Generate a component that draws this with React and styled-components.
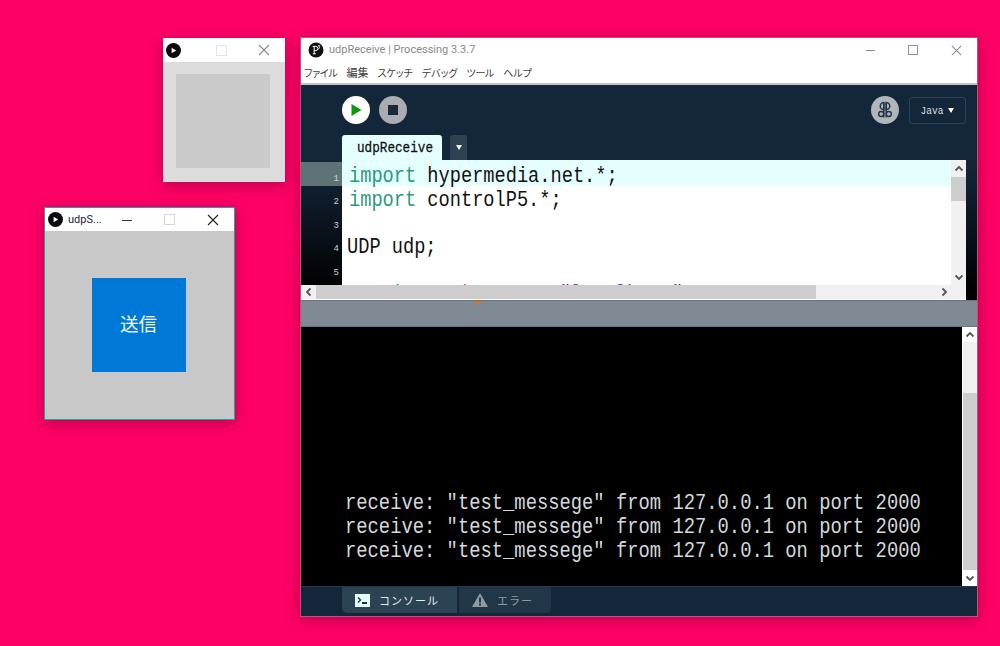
import React from "react";
import styled, { createGlobalStyle } from "styled-components";

const Global = createGlobalStyle`
  html, body { margin: 0; padding: 0; background: #ff0066; }
  body { font-family: "Noto Sans CJK JP", "Noto Sans", sans-serif; overflow: hidden; }
`;
const MONO = `"Liberation Mono", "DejaVu Sans Mono", monospace`;

const Desktop = styled.div`position: relative; width: 1000px; height: 646px; background: #ff0066; overflow: hidden;`;

const AppWindow = styled.div`
  position: absolute; left: ${p => p.$x}px; top: ${p => p.$y}px; width: ${p => p.$w}px; height: ${p => p.$h}px;
  box-sizing: border-box; display: flex; flex-direction: column;
  border: ${p => p.$border ? `1px solid ${p.$border}` : "none"};
  box-shadow: 0 3px 14px rgba(0,0,0,.28);
`;
const TitleBar = styled.div`
  height: ${p => p.$h}px; flex: none; background: #fff; display: flex; align-items: center; position: relative;
  padding-left: ${p => p.$pad}px;
  svg { flex: none; }
`;
const TitleText = styled.span`
  font-family: Roboto, "Liberation Sans", sans-serif; font-size: 11px; color: ${p => p.$c}; margin-left: ${p => p.$ml}px; white-space: nowrap; line-height: 14px;
`;
const Spacer = styled.div`flex: 1;`;
const Caption = styled.span`
  width: ${p => p.$w}px; height: 100%; display: flex; align-items: center; justify-content: center; flex: none;
`;

const Glyph = ({ kind, c, size = 12 }) => (
  <svg width={size} height={size} viewBox="0 0 12 12" fill="none" stroke={c} strokeWidth="1.1" shapeRendering="crispEdges">
    {kind === "min" && <path d="M1 6.5h10" />}
    {kind === "max" && <rect x="1" y="1" width="10" height="10" />}
    {kind === "close" && <path d="M1 1l10 10M11 1L1 11" shapeRendering="auto" />}
  </svg>
);
const ProcIcon = () => (
  <svg width="15" height="15" viewBox="0 0 15 15">
    <circle cx="7.5" cy="7.5" r="7.5" fill="#0b0b0b" />
    <path d="M5.6 4.8l4.6 2.7-4.6 2.7z" fill="#fff" />
  </svg>
);
const P3Icon = () => (
  <svg width="16" height="16" viewBox="0 0 16 16">
    <circle cx="8" cy="8" r="7.5" fill="#111" />
    <path d="M4.6 4.4h3.2a2 2 0 0 1 0 4.2H6.2M6.2 4.4v7.4M4.8 11.8h3" fill="none" stroke="#fff" strokeWidth="1" />
    <path d="M10 3.6h1.8l-1 1.2a.9.9 0 1 1-.9 1.3" fill="none" stroke="#fff" strokeWidth=".8" />
  </svg>
);

const Menu = styled.div`
  height: 21px; flex: none; background: #fff; display: flex; align-items: center; padding-left: 3px; gap: 9px;
  border-bottom: 2px solid #c4c4c4; box-sizing: content-box;
`;
const MenuItem = styled.span`
  font-size: ${p => p.$s}px; color: #3d3d3d; line-height: 21px; white-space: nowrap; font-feature-settings: "palt";
  letter-spacing: ${p => p.$ls}px;
`;

const DarkArea = styled.div`
  height: 215px; flex: none; display: flex; flex-direction: column;
  background: linear-gradient(#14273a 0%, #14273a 35%, #000 95%);
`;
const Toolbar = styled.div`height: 50px; flex: none; display: flex; align-items: center; padding: 0 11px 0 41px; margin-top: 0;`;
const RoundBtn = styled.div`
  width: 28px; height: 28px; border-radius: 50%; background: ${p => p.$bg}; display: flex; align-items: center; justify-content: center;
  margin-right: ${p => p.$mr || 0}px; flex: none;
`;
const JavaBtn = styled.div`
  width: 57px; height: 27px; box-sizing: border-box; border: 1px solid #2c4154; border-radius: 3px; margin-left: 10px;
  color: #d9dfe3; font-family: ${MONO}; display: flex; align-items: center; justify-content: center; gap: 5px; flex: none;
`;
const JavaLabel = styled.span`font-size: 9.5px; transform: scaleY(1.2); display: inline-block;`;
const Caret = styled.span`
  width: 0; height: 0; border-left: ${p => p.$s}px solid transparent; border-right: ${p => p.$s}px solid transparent; border-top: ${p => p.$s + 2}px solid #fff;
`;
const TabRow = styled.div`height: 25px; flex: none; display: flex; padding-left: 41px; gap: 8px;`;
const Tab = styled.div`
  width: 100px; box-sizing: border-box; padding-left: 6px; background: #e5ffff; border-radius: 3px 3px 0 0; color: #111;
  display: flex; align-items: center; justify-content: center;
`;
const TabLabel = styled.span`
  font-family: ${MONO}; font-size: 12.7px; display: inline-block; transform: scaleY(1.12); -webkit-text-stroke: .25px #111; margin-top: 1px;
`;
const TabMenu = styled.div`
  width: 17px; background: #2e4252; border-radius: 3px 3px 0 0; display: flex; align-items: center; justify-content: center;
`;
const EditorRow = styled.div`flex: 1; display: flex; min-height: 0; padding-right: 11px;`;
const Gutter = styled.div`width: 41px; flex: none; padding-top: 2px; box-sizing: border-box; display: flex; flex-direction: column;`;
const LineNo = styled.div`
  height: 23.5px; flex: none; display: flex; align-items: flex-end; justify-content: flex-end; padding: 0 3px 2px 0; box-sizing: border-box;
  font-family: ${MONO}; font-size: 9px; color: #c8d0d4; background: ${p => p.$on ? "#5f7377" : "transparent"};
`;
const EditorCol = styled.div`flex: 1; min-width: 0; display: flex; flex-direction: column;`;
const CodeWrap = styled.div`flex: 1; min-height: 0; display: flex;`;
const Code = styled.div`flex: 1; min-width: 0; background: #fff; overflow: hidden; padding-top: 2px; box-shadow: inset 0 2px 0 #e5ffff;`;
const CodeLine = styled.div`
  height: 23.6px; padding-left: ${p => p.$pl ?? 7}px; background: ${p => p.$on ? "#e5ffff" : "transparent"};
`;
const CodeText = styled.span`
  display: inline-block; height: 23.6px; line-height: 23.6px; font-family: ${MONO}; font-size: 18.7px; white-space: pre; color: #111;
  transform: scaleY(1.22); transform-origin: 0 46%; letter-spacing: -.02px;
`;
const Kw = styled.span`color: ${p => p.$c};`;
const VBar = styled.div`
  width: ${p => p.$w}px; flex: none; background: #f0f0f0; display: flex; flex-direction: column; box-sizing: border-box;
  border-left: ${p => p.$edge ? "1px solid #fff" : "none"};
`;
const Arrow = styled.div`height: ${p => p.$h}px; flex: none; display: flex; align-items: center; justify-content: center; background: ${p => p.$bg || "transparent"};`;
const Thumb = styled.div`height: ${p => p.$h}px; flex: ${p => p.$grow ? 1 : "none"}; background: #cdcdcd;`;
const Fill = styled.div`flex: ${p => p.$fixed ? "none" : 1}; height: ${p => p.$fixed ? `${p.$fixed}px` : "auto"}; min-height: 0;`;
const HBar = styled.div`height: 14px; flex: none; display: flex; background: #f0f0f0; align-items: stretch; margin-left: -41px; border-bottom: 1px solid #fff; box-sizing: content-box; `;
const HArrow = styled.div`width: 15px; flex: none; display: flex; align-items: center; justify-content: center; margin-right: ${p => p.$mr || 0}px;`;
const HThumb = styled.div`width: 500px; flex: none; background: #cdcdcd;`;

const Status = styled.div`height: 25px; flex: none; background: #808a94; border-top: 1px solid #6c747c; border-bottom: 1px solid #6c747c; box-sizing: content-box; position: relative;`;
const Speck = styled.div`position: absolute; left: 172px; top: 0; width: 9px; height: 2px; border-radius: 0 0 5px 5px; background: #e0701e;`;
const ConsoleRow = styled.div`flex: 1; min-height: 0; display: flex; background: #000;`;
const ConsoleText = styled.div`
  flex: 1; display: flex; flex-direction: column; justify-content: flex-end; padding: 0 0 23px 44px;
`;
const ConsoleLine = styled.div`
  height: 24px; line-height: 24px; font-family: ${MONO}; font-size: 18.82px; color: #d3d9dc; white-space: pre;
  transform: scaleY(1.22); transform-origin: 0 50%;
`;
const Footer = styled.div`height: 30px; flex: none; background: #14273a; border-top: 1px solid #24394a; box-sizing: border-box; display: flex; padding-left: 41px; gap: 2px;`;
const FootTab = styled.div`
  width: ${p => p.$w}px; height: 26px; background: ${p => p.$bg}; display: flex; align-items: center; box-sizing: border-box; padding-left: 13px;
  border-radius: ${p => p.$r};
`;
const FootLabel = styled.span`font-size: 11px; letter-spacing: 1px; color: ${p => p.$c}; margin-left: ${p => p.$ml}px; line-height: 14px;`;

const Body1 = styled.div`flex: 1; background: #dcdcdc; display: flex; align-items: center; justify-content: center; padding: 0 2px 2px 0;`;
const Inner = styled.div`width: 94px; height: 94px; background: #cacaca;`;
const Body2 = styled.div`flex: 1; background: #c8c8c8; display: flex; align-items: center; justify-content: center; padding-right: 2px;`;
const SendBtn = styled.button`
  width: 94px; height: 94px; padding: 0 0 4px; border: 0; background: #0078d7; color: #f2f8fd; font-family: "Noto Sans CJK JP", sans-serif; font-size: 18.5px;
`;
const Chev = ({ d, c = "#555" }) => {
  const paths = { up: "M1.5 6.5L5 3l3.5 3.5", down: "M1.5 3.5L5 7l3.5-3.5", left: "M6.5 1.5L3 5l3.5 3.5", right: "M3.5 1.5L7 5l-3.5 3.5" };
  return <svg width="10" height="10" viewBox="0 0 10 10" fill="none" stroke={c} strokeWidth="1.8"><path d={paths[d]} /></svg>;
};
const menu = [["ファイル", 10, -.3], ["編集", 11, 0], ["スケッチ", 10, 0], ["デバッグ", 10, 0], ["ツール", 10, -.3], ["ヘルプ", 10, 0]];
const log = `receive: "test_messege" from 127.0.0.1 on port 2000`;

export default function App() {
  return (
    <Desktop>
      <Global />
      <AppWindow $x={163} $y={38} $w={122} $h={144}>
        <TitleBar $h={24} $pad={3}>
          <ProcIcon />
          <Spacer />
          <Caption $w={44}><Glyph kind="max" c="#e4e4e4" size={11} /></Caption>
          <Caption $w={42}><Glyph kind="close" c="#8a8a8a" /></Caption>
        </TitleBar>
        <Body1><Inner /></Body1>
      </AppWindow>

      <AppWindow $x={44} $y={207} $w={191} $h={213} $border="#2a9d9d">
        <TitleBar $h={23} $pad={3}>
          <ProcIcon />
          <TitleText $c="#1c1c3a" $ml={5}>udpS...</TitleText>
          <Spacer />
          <Caption $w={43}><Glyph kind="min" c="#333" /></Caption>
          <Caption $w={43}><Glyph kind="max" c="#d6d6d6" size={11} /></Caption>
          <Caption $w={43}><Glyph kind="close" c="#222" /></Caption>
        </TitleBar>
        <Body2><SendBtn>送信</SendBtn></Body2>
      </AppWindow>

      <AppWindow $x={300} $y={37} $w={678} $h={580} $border="#b8557f">
        <TitleBar $h={24} $pad={7}>
          <P3Icon />
          <TitleText $c="#8a8a8a" $ml={5}>udpReceive | Processing 3.3.7</TitleText>
          <Spacer />
          <Caption $w={40}><Glyph kind="min" c="#8a8a8a" size={11} /></Caption>
          <Caption $w={45}><Glyph kind="max" c="#8a8a8a" size={10} /></Caption>
          <Caption $w={42}><Glyph kind="close" c="#8a8a8a" size={11} /></Caption>
        </TitleBar>
        <Menu>{menu.map(([m, s, ls]) => <MenuItem key={m} $s={s} $ls={ls}>{m}</MenuItem>)}</Menu>
        <DarkArea>
          <Toolbar>
            <RoundBtn $bg="#fff" $mr={9}>
              <svg width="14" height="14" viewBox="0 0 14 14"><path d="M2.500 1l10 6-10 6z" fill="#0a9a0a" /></svg>
            </RoundBtn>
            <RoundBtn $bg="#a9adb2">
              <svg width="10" height="10" viewBox="0 0 10 10"><rect width="10" height="10" fill="#1b2a38" /></svg>
            </RoundBtn>
            <Spacer />
            <RoundBtn $bg="#b0b5ba">
              <svg width="18" height="18" viewBox="0 0 18 18" fill="none" stroke="#233548" strokeWidth="1.4">
                <path d="M7.800 1.500C5 1.500 3.800 4 4.300 6.300c.4 1.300 2 2.100 3.500 2.600zM10.200 1.500C13 1.500 14.200 4 13.700 6.300c-.4 1.300-2 2.100-3.500 2.600z" />
                <circle cx="5.200" cy="13" r="2.500" /><circle cx="12.800" cy="13" r="2.500" />
                <path d="M7.800 1.500v15M10.200 1.500v15" />
              </svg>
            </RoundBtn>
            <JavaBtn><JavaLabel>Java</JavaLabel> <Caret $s={3} /></JavaBtn>
          </Toolbar>
          <TabRow>
            <Tab><TabLabel>udpReceive</TabLabel></Tab>
            <TabMenu><Caret $s={3} /></TabMenu>
          </TabRow>
          <EditorRow>
            <Gutter>
              {[1, 2, 3, 4, 5].map(n => <LineNo key={n} $on={n === 1}>{n}</LineNo>)}
            </Gutter>
            <EditorCol>
              <CodeWrap>
                <Code>
                  <CodeLine $on><CodeText><Kw $c="#2a9a7c">import</Kw> hypermedia.net.*;</CodeText></CodeLine>
                  <CodeLine><CodeText><Kw $c="#2a9a7c">import</Kw> controlP5.*;</CodeText></CodeLine>
                  <CodeLine $pl={5} />
                  <CodeLine $pl={5}><CodeText>UDP udp;</CodeText></CodeLine>
                  <CodeLine $pl={5} />
                  <CodeLine $pl={5}><CodeText><Kw $c="#2a9a7c">Static</Kw> <Kw $c="#e2661a">String</Kw> IP = <Kw $c="#7d4793">"localhost"</Kw>;</CodeText></CodeLine>
                </Code>
                <VBar $w={15}>
                  <Arrow $h={17}><Chev d="up" /></Arrow>
                  <Thumb $h={24} />
                  <Fill />
                  <Arrow $h={16}><Chev d="down" /></Arrow>
                </VBar>
              </CodeWrap>
              <HBar>
                <HArrow><Chev d="left" /></HArrow>
                <HThumb />
                <Fill />
                <HArrow $mr={15}><Chev d="right" /></HArrow>
              </HBar>
            </EditorCol>
          </EditorRow>
        </DarkArea>
        <Status><Speck /></Status>
        <ConsoleRow>
          <ConsoleText>
            <ConsoleLine>{log}</ConsoleLine>
            <ConsoleLine>{log}</ConsoleLine>
            <ConsoleLine>{log}</ConsoleLine>
          </ConsoleText>
          <VBar $w={15} $edge>
            <Arrow $h={15} $bg="#fff"><Chev d="up" /></Arrow>
            <Fill $fixed={51} />
            <Thumb $h={177} $grow />
            <Arrow $h={16} $bg="#fff"><Chev d="down" /></Arrow>
          </VBar>
        </ConsoleRow>
        <Footer>
          <FootTab $w={115} $bg="#2c4353" $r="0 0 0 5px">
            <svg width="15" height="13" viewBox="0 0 15 13" shapeRendering="crispEdges">
              <rect width="15" height="13" fill="#e5ffff" />
              <path d="M3 3.500l2.500 2.500L3 8.500" fill="none" stroke="#1b2e3e" strokeWidth="1.300" shapeRendering="auto" />
              <rect x="7" y="8" width="5" height="1.500" fill="#1b2e3e" />
            </svg>
            <FootLabel $c="#e3eaee" $ml={9}>コンソール</FootLabel>
          </FootTab>
          <FootTab $w={92} $bg="#213646" $r="0 0 5px 0">
            <svg width="16" height="14" viewBox="0 0 16 14">
              <path d="M8 0l8 14H0z" fill="#8f9aa2" />
              <rect x="7" y="4.500" width="2" height="5" fill="#213646" />
              <rect x="7" y="10.500" width="2" height="2" fill="#213646" />
            </svg>
            <FootLabel $c="#8f9aa2" $ml={9}>エラー</FootLabel>
          </FootTab>
        </Footer>
      </AppWindow>
    </Desktop>
  );
}
